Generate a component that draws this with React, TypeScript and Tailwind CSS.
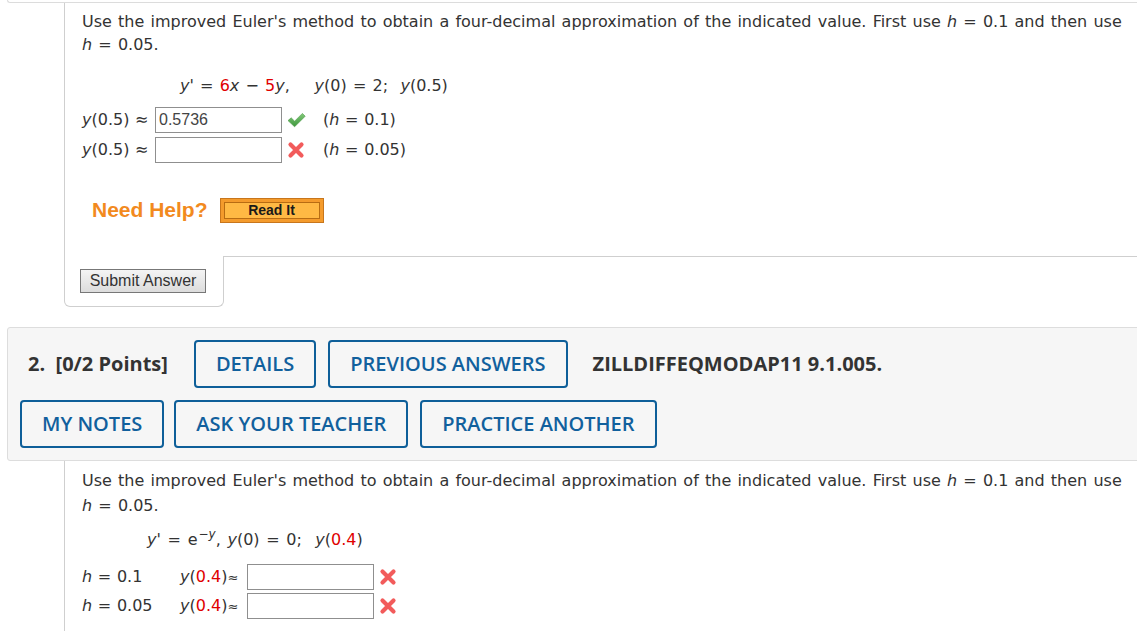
import React from "react";

const verdana = { fontFamily: '"DejaVu Sans", Verdana, sans-serif' };

function Check() {
  return (
    <svg width="19" height="16" viewBox="0 0 19 16" className="block">
      <defs>
        <linearGradient id="cg" x1="0" y1="0" x2="0" y2="1">
          <stop offset="0" stopColor="#82c87a" />
          <stop offset="1" stopColor="#3d973c" />
        </linearGradient>
      </defs>
      <path d="M1 8.6 L4.2 5.8 L7.6 9.2 L15.4 1.4 L18.2 4.2 L7.6 14.8 Z" fill="url(#cg)" stroke="#4b9a47" strokeWidth="0.6" strokeLinejoin="round" />
    </svg>
  );
}

function Cross() {
  return (
    <svg width="18" height="18" viewBox="0 0 18 18" className="block">
      <path d="M3.5 3.5 L14.5 14.5 M14.5 3.5 L3.5 14.5" stroke="#f25b5b" strokeWidth="4.2" strokeLinecap="round" />
    </svg>
  );
}

function I({ children }: { children: React.ReactNode }) {
  return <i className="italic">{children}</i>;
}

function R({ children }: { children: React.ReactNode }) {
  return <span className="text-[#e00000]">{children}</span>;
}

function OutlineBtn({ children, className = "" }: { children: React.ReactNode; className?: string }) {
  return (
    <div
      className={`h-[48px] flex items-center border-2 border-[#0e5f99] rounded-[4px] px-[20px] text-[20px] font-semibold text-[#11609d] bg-[#f6f6f6] ${className}`}
    >
      {children}
    </div>
  );
}

export default function App() {
  return (
    <div className="w-[1137px] h-[631px] overflow-hidden bg-white text-[#333]" style={verdana}>
      {/* remnant of previous section */}
      <div className="ml-[7px] h-[3px] border-l border-b border-[#dcdcdc] rounded-bl-[3px]" />

      {/* Question 1 body */}
      <div className="ml-[64px] border-l border-[#cfcfcf] pl-[17px] pt-[7px] pb-[31px] text-[16px] [word-spacing:1.1px]">
        <p className="leading-[23px] whitespace-nowrap">
          Use the improved Euler's method to obtain a four-decimal approximation of the indicated value. First use{" "}
          <I>h</I> = 0.1 and then use
          <br />
          <I>h</I> = 0.05.
        </p>
        <div className="mt-[18px] leading-[23px] pl-[98px] whitespace-pre">
          <I>y</I>' = <R>6</R><I>x</I> − <R>5</R><I>y</I>,    <I>y</I>(0) = 2;  <I>y</I>(0.5)
        </div>
        <div className="mt-[8px] flex flex-col [word-spacing:0.6px]">
          <div className="h-[30px] flex items-center">
            <span className="w-[73px] whitespace-nowrap">
              <I>y</I>(0.5) ≈
            </span>
            <div className="w-[127px] h-[26px] border border-[#8f8f8f] bg-white flex items-center pl-[3px] text-[16px] text-[#444]" style={{ fontFamily: '"Liberation Sans", Arial, sans-serif' }}>
              0.5736
            </div>
            <div className="ml-[5px]"><Check /></div>
            <span className="ml-[17px] whitespace-nowrap">
              (<I>h</I> = 0.1)
            </span>
          </div>
          <div className="h-[30px] flex items-center">
            <span className="w-[73px] whitespace-nowrap">
              <I>y</I>(0.5) ≈
            </span>
            <div className="w-[127px] h-[26px] border border-[#8f8f8f] bg-white" />
            <div className="ml-[5px]"><Cross /></div>
            <span className="ml-[18px] whitespace-nowrap">
              (<I>h</I> = 0.05)
            </span>
          </div>
        </div>
        <div className="mt-[30px] h-[30px] flex items-center pl-[10px] [word-spacing:0px]" style={{ fontFamily: '"Liberation Sans", Arial, sans-serif' }}>
          <span className="text-[21px] font-bold text-[#f28a1e]">Need Help?</span>
          <div className="ml-[12px] w-[104px] h-[25px] border border-[#c8761c] bg-[#f49b2c] p-[3px]">
            <div className="w-full h-full border border-[#b86c12] bg-[#ffb944] flex items-center justify-center text-[14px] font-bold text-[#1a1a1a]">
              Read It
            </div>
          </div>
        </div>
      </div>

      {/* Submit tab */}
      <div className="ml-[64px] flex">
        <div className="w-[160px] h-[51px] border-l border-b border-r border-[#cfcfcf] rounded-b-[6px] pl-[15px] pt-[13px]">
          <div
            className="w-[126px] h-[24px] border border-[#777] bg-gradient-to-b from-[#f4f4f4] to-[#dcdcdc] flex items-center justify-center text-[16px] text-[#333]"
            style={{ fontFamily: '"Liberation Sans", Arial, sans-serif' }}
          >
            Submit Answer
          </div>
        </div>
        <div className="flex-1 border-t border-[#cfcfcf]" />
      </div>

      {/* Question 2 header */}
      <div
        className="mt-[20px] ml-[7px] w-[1150px] border border-[#dddddd] rounded-[3px] bg-[#f6f6f6] pl-[12px] pt-[12px] pb-[12px] flex flex-col gap-[12px]"
        style={{ fontFamily: '"Open Sans", sans-serif' }}
      >
        <div className="flex items-center">
          <span className="ml-[8px] text-[20px] font-bold text-[#333] whitespace-pre">2.  [0/2 Points]</span>
          <OutlineBtn className="ml-[26px]">DETAILS</OutlineBtn>
          <OutlineBtn className="ml-[12px]">PREVIOUS ANSWERS</OutlineBtn>
          <span className="ml-[25px] text-[20px] font-bold text-[#333]">ZILLDIFFEQMODAP11 9.1.005.</span>
        </div>
        <div className="flex items-center">
          <OutlineBtn>MY NOTES</OutlineBtn>
          <OutlineBtn className="ml-[10px]">ASK YOUR TEACHER</OutlineBtn>
          <OutlineBtn className="ml-[12px]">PRACTICE ANOTHER</OutlineBtn>
        </div>
      </div>

      {/* Question 2 body */}
      <div className="ml-[64px] border-l border-[#cfcfcf] pl-[17px] pt-[7px] pb-[40px] text-[16px] [word-spacing:1.1px]">
        <p className="leading-[25px] whitespace-nowrap">
          Use the improved Euler's method to obtain a four-decimal approximation of the indicated value. First use{" "}
          <I>h</I> = 0.1 and then use
          <br />
          <I>h</I> = 0.05.
        </p>
        <div className="mt-[10px] leading-[23px] pl-[65px] whitespace-pre [word-spacing:1.6px]">
          <I>y</I>' = e<sup className="text-[12px] relative -top-[7px] ml-[1px]">−<I>y</I></sup>, <I>y</I>(0) = 0;  <I>y</I>(<R>0.4</R>)
        </div>
        <div className="mt-[11px] flex flex-col [word-spacing:0.6px]">
          <div className="h-[29px] flex items-center">
            <span className="w-[98px] whitespace-nowrap">
              <I>h</I> = 0.1
            </span>
            <span className="w-[67px] whitespace-nowrap">
              <I>y</I>(<R>0.4</R>)<span className="text-[13px]">≈</span>
            </span>
            <div className="w-[127px] h-[26px] border border-[#8f8f8f] bg-white" />
            <div className="ml-[5px]"><Cross /></div>
          </div>
          <div className="h-[29px] flex items-center">
            <span className="w-[98px] whitespace-nowrap">
              <I>h</I> = 0.05
            </span>
            <span className="w-[67px] whitespace-nowrap">
              <I>y</I>(<R>0.4</R>)<span className="text-[13px]">≈</span>
            </span>
            <div className="w-[127px] h-[26px] border border-[#8f8f8f] bg-white" />
            <div className="ml-[5px]"><Cross /></div>
          </div>
        </div>
      </div>
    </div>
  );
}
